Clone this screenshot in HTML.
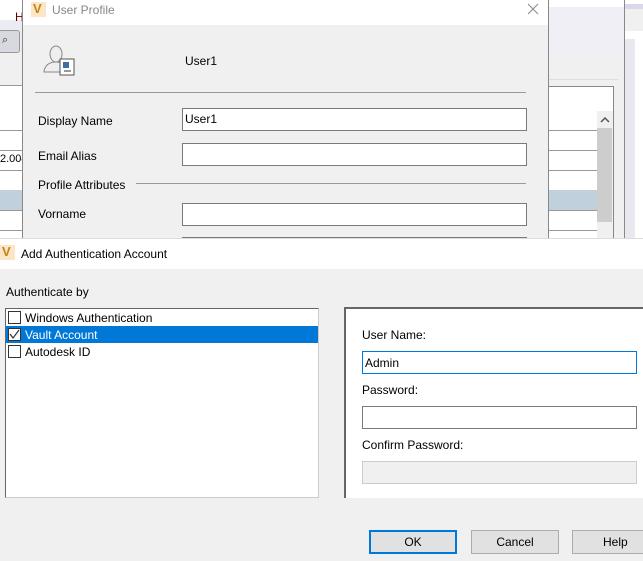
<!DOCTYPE html>
<html><head><style>
*{margin:0;padding:0;box-sizing:border-box}
body{width:643px;height:561px;overflow:hidden;position:relative;background:#fff;font-family:"Liberation Sans",sans-serif;font-size:12px;color:#000}
.a{position:absolute}
.t{position:absolute;white-space:nowrap}
.inp{position:absolute;background:#fff;border:1px solid #7a7a7a}
.cb{position:absolute;width:13px;height:13px;border:1px solid #333;background:#fff}
.btn{position:absolute;height:24px;background:#e1e1e1;border:1px solid #adadad;text-align:center;line-height:22px}
</style></head><body>
<div class="a" style="left:0;top:20px;width:23px;height:33px;background:#ebebf2"></div>
<div class="t" style="left:15px;top:10px;color:#600;font-size:12px">H</div>
<div class="a" style="left:0;top:30px;width:20px;height:23px;background:#d8d8e0;border:1px solid #999;border-left:none;border-radius:0 3px 3px 0"></div>
<div class="t" style="left:2px;top:34px;font-size:11px;color:#333">⌕</div>
<div class="a" style="left:0;top:53px;width:23px;height:32px;background:#f0f0f0"></div>
<div class="a" style="left:0;top:85px;width:23px;height:1px;background:#999"></div>
<div class="a" style="left:0;top:130px;width:23px;height:1px;background:#999"></div>
<div class="a" style="left:0;top:150px;width:23px;height:1px;background:#999"></div>
<div class="t" style="left:0;top:153px;font-size:11px">2.004</div>
<div class="a" style="left:0;top:170px;width:23px;height:1px;background:#999"></div>
<div class="a" style="left:0;top:190px;width:23px;height:20px;background:#c0d0dc"></div>
<div class="a" style="left:0;top:210px;width:23px;height:1px;background:#999"></div>
<div class="a" style="left:0;top:230px;width:23px;height:1px;background:#999"></div>
<div class="a" style="left:548px;top:7px;width:76px;height:46px;background:#efeff5"></div>
<div class="a" style="left:548px;top:53px;width:76px;height:187px;background:#f0f0f0"></div>
<div class="a" style="left:548px;top:79px;width:70px;height:1px;background:#ddd"></div>
<div class="a" style="left:548px;top:86px;width:66px;height:154px;background:#fff;border-top:1px solid #808890;border-right:1px solid #808890"></div>
<div class="a" style="left:548px;top:130px;width:49px;height:1px;background:#999"></div>
<div class="a" style="left:548px;top:150px;width:49px;height:1px;background:#999"></div>
<div class="a" style="left:548px;top:170px;width:49px;height:1px;background:#999"></div>
<div class="a" style="left:548px;top:190px;width:49px;height:20px;background:#c0d0dc"></div>
<div class="a" style="left:548px;top:210px;width:49px;height:1px;background:#999"></div>
<div class="a" style="left:548px;top:230px;width:49px;height:1px;background:#999"></div>
<div class="a" style="left:597px;top:111px;width:16px;height:129px;background:#f0f0f0"></div>
<svg class="a" style="left:600px;top:116px" width="10" height="8"><path d="M1 6 L5 2 L9 6" stroke="#555" stroke-width="1.5" fill="none"/></svg>
<div class="a" style="left:597px;top:128px;width:15px;height:94px;background:#cdcdcd"></div>
<div class="a" style="left:624px;top:0;width:1px;height:240px;background:#888"></div>
<div class="a" style="left:625px;top:4px;width:18px;height:5px;background:#d8d8e8"></div>
<div class="a" style="left:625px;top:9px;width:18px;height:22px;background:#f0f0f0"></div>
<div class="a" style="left:625px;top:39px;width:10px;height:201px;background:#e8e8ee"></div>
<div class="a" style="left:22px;top:0;width:527px;height:240px;background:#f0f0f0;border-left:1px solid #888;border-right:1px solid #888"></div>
<div class="a" style="left:23px;top:0;width:525px;height:25px;background:#fff"></div>
<div class="a" style="left:31px;top:2px;width:15px;height:15px;background:#fbe6c8"></div>
<div class="t" style="left:33px;top:1px;font-weight:bold;color:#c98015;font-size:13px">V</div>
<div class="t" style="left:52px;top:3px;color:#888;font-size:12px">User Profile</div>
<svg class="a" style="left:527px;top:3px" width="12" height="12"><path d="M1 1 L11 11 M11 1 L1 11" stroke="#888" stroke-width="1"/></svg>
<svg class="a" style="left:42px;top:44px" width="34" height="32" viewBox="0 0 34 32">
<ellipse cx="14" cy="10" rx="6" ry="8" fill="#eee" stroke="#888"/>
<path d="M2 27 Q4 18 14 18 Q22 18 24 24 L24 28 L2 28 Z" fill="#eee" stroke="#888"/>
<rect x="18" y="15" width="14" height="16" fill="#fff" stroke="#555"/>
<rect x="21" y="18" width="6" height="6" fill="#3a6ea5"/>
<path d="M22 27 h7" stroke="#333"/>
</svg>
<div class="t" style="left:185px;top:54px">User1</div>
<div class="a" style="left:35px;top:92px;width:491px;height:1px;background:#999"></div>
<div class="t" style="left:38px;top:114px">Display Name</div>
<div class="inp" style="left:182px;top:108px;width:345px;height:23px"></div>
<div class="t" style="left:185px;top:112px">User1</div>
<div class="t" style="left:38px;top:149px">Email Alias</div>
<div class="inp" style="left:182px;top:143px;width:345px;height:23px"></div>
<div class="t" style="left:38px;top:178px">Profile Attributes</div>
<div class="a" style="left:136px;top:183px;width:390px;height:1px;background:#999"></div>
<div class="t" style="left:38px;top:207px">Vorname</div>
<div class="inp" style="left:182px;top:203px;width:345px;height:23px"></div>
<div class="inp" style="left:182px;top:237px;width:345px;height:10px"></div>
<div class="a" style="left:0;top:238px;width:643px;height:31px;background:#fff;border-top:1px solid #ddd"></div>
<div class="a" style="left:0;top:245px;width:15px;height:15px;background:#fbe6c8"></div>
<div class="t" style="left:2px;top:244px;font-weight:bold;color:#c98015;font-size:13px">V</div>
<div class="t" style="left:21px;top:247px">Add Authentication Account</div>
<div class="a" style="left:0;top:269px;width:643px;height:292px;background:#f0f0f0"></div>
<div class="t" style="left:6px;top:285px">Authenticate by</div>
<div class="a" style="left:5px;top:308px;width:314px;height:190px;background:#fff;border:1px solid #ccc;border-left:1px solid #666;border-top:1px solid #666"></div>
<div class="a" style="left:6px;top:326px;width:312px;height:17px;background:#0078d7"></div>
<div class="cb" style="left:8px;top:311px"></div>
<div class="t" style="left:25px;top:311px">Windows Authentication</div>
<div class="cb" style="left:8px;top:328px"></div>
<svg class="a" style="left:9px;top:329px" width="11" height="11"><path d="M1 5 L4 9 L10 1" stroke="#333" stroke-width="1.2" fill="none"/></svg>
<div class="t" style="left:25px;top:328px;color:#fff">Vault Account</div>
<div class="cb" style="left:8px;top:345px"></div>
<div class="t" style="left:25px;top:345px">Autodesk ID</div>
<div class="a" style="left:344px;top:307px;width:300px;height:191px;background:#fff;border-top:2px solid #666;border-left:2px solid #666"></div>
<div class="t" style="left:362px;top:328px">User Name:</div>
<div class="inp" style="left:362px;top:351px;width:275px;height:23px;border-color:#0078d7"></div>
<div class="t" style="left:365px;top:356px">Admin</div>
<div class="t" style="left:362px;top:383px">Password:</div>
<div class="inp" style="left:362px;top:406px;width:275px;height:23px"></div>
<div class="t" style="left:362px;top:438px">Confirm Password:</div>
<div class="inp" style="left:362px;top:461px;width:275px;height:23px;background:#f0f0f0;border-color:#ccc"></div>
<div class="btn" style="left:369px;top:530px;width:88px;border:2px solid #0078d7;line-height:20px">OK</div>
<div class="btn" style="left:471px;top:530px;width:88px">Cancel</div>
<div class="btn" style="left:572px;top:530px;width:80px;text-align:left;padding-left:30px">Help</div>
</body></html>
